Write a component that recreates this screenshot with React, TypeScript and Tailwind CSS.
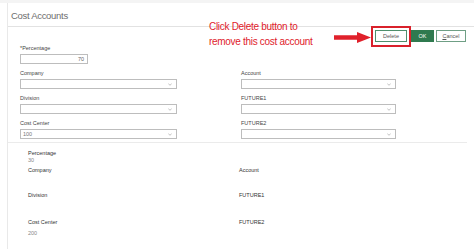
import React from "react";

function Chevron() {
  return (
    <svg width="4" height="3" viewBox="0 0 4 3" className="shrink-0">
      <path d="M0.3 0.5 L2 2.3 L3.7 0.5" fill="none" stroke="#9a9a9a" strokeWidth="0.6" />
    </svg>
  );
}

function SelectBox({ value, width }: { value?: string; width: string }) {
  return (
    <div className={`mt-[2px] flex h-[10px] items-center justify-between border border-[#bdbdbd] bg-white pl-[2px] pr-[4px] ${width}`}>
      <span className="text-[5.5px] leading-[7px] text-[#777]">{value}</span>
      <Chevron />
    </div>
  );
}

function FormField({ label, value, width }: { label: string; value?: string; width: string }) {
  return (
    <div>
      <div className="text-[5.5px] leading-[7px] text-[#454545]">{label}</div>
      <SelectBox value={value} width={width} />
    </div>
  );
}

function ReadLabel({ children }: { children: React.ReactNode }) {
  return <div className="text-[5.5px] leading-[7px] text-[#333]">{children}</div>;
}

export default function App() {
  return (
    <div className="relative h-[249px] w-[474px] overflow-hidden bg-white font-['Liberation_Sans',Arial,sans-serif]">
      <div className="h-[3px] bg-[#f4f4f4]" />
      <div className="ml-[7px] h-[246px] border-l border-[#e9e9e9]">
        <div className="border-b border-[#e2e2e2] pb-[4px] pl-[3px] pt-[7px] text-[9.5px] leading-[12px] tracking-[-0.3px] text-[#6e6e6e]">
          Cost Accounts
        </div>

        <div className="flex items-start justify-between">
          <div className="ml-[12px] mt-[18px]">
            <div className="text-[5.5px] leading-[7px] text-[#454545]">*Percentage</div>
            <div className="mt-[2px] flex h-[10px] w-[68px] items-center justify-end border border-[#bdbdbd] pr-[3px] text-[5.5px] leading-[7px] text-[#666]">
              70
            </div>
          </div>
          <div className="mr-[8px] mt-[3px] flex items-start">
            <div className="relative h-[12px] w-[32px]">
              <button className="flex h-[12px] w-[32px] items-center justify-center border border-[#4f8f6c] bg-white text-[5.5px] leading-[7px] text-[#555]">
                Delete
              </button>
              <div className="absolute -left-[4px] -top-[4px] h-[21px] w-[40px] border-2 border-[#d9212b]" />
            </div>
            <button className="ml-[4px] flex h-[12px] w-[23px] items-center justify-center bg-[#2f7a4f] text-[5.5px] leading-[7px] text-white">
              OK
            </button>
            <button className="ml-[2px] flex h-[12px] w-[30px] items-center justify-center border border-[#6f9f85] bg-white text-[5.5px] leading-[7px] text-[#555]">
              <span className="underline">C</span>ancel
            </button>
          </div>
        </div>

        <div className="ml-[12px] mt-[6px] grid grid-cols-[157px_155px] gap-x-[64px] gap-y-[6px]">
          <FormField label="Company" width="w-[157px]" />
          <FormField label="Account" width="w-[155px]" />
          <FormField label="Division" width="w-[157px]" />
          <FormField label="FUTURE1" width="w-[155px]" />
          <FormField label="Cost Center" value="100" width="w-[157px]" />
          <FormField label="FUTURE2" width="w-[155px]" />
        </div>

        <div className="mr-[7px] mt-[3px] border-b border-[#ebebeb]" />

        <div className="pl-[20px] pt-[7px]">
          <ReadLabel>Percentage</ReadLabel>
          <div className="text-[5.5px] leading-[7px] text-[#888]">30</div>
          <div className="mt-[3px] grid grid-cols-[211px_auto]">
            <div className="h-[25px]"><ReadLabel>Company</ReadLabel></div>
            <div className="h-[25px]"><ReadLabel>Account</ReadLabel></div>
            <div className="h-[27px]"><ReadLabel>Division</ReadLabel></div>
            <div className="h-[27px]"><ReadLabel>FUTURE1</ReadLabel></div>
            <div>
              <ReadLabel>Cost Center</ReadLabel>
              <div className="mt-[4px] text-[5.5px] leading-[7px] text-[#888]">200</div>
            </div>
            <div><ReadLabel>FUTURE2</ReadLabel></div>
          </div>
        </div>
      </div>

      {/* annotation callout */}
      <div className="absolute left-[209px] top-[19px] text-[10px] leading-[15px] tracking-[-0.3px] text-[#e0212b]">
        <div>Click Delete button to</div>
        <div>remove this cost account</div>
      </div>
      <svg className="absolute left-[334px] top-[32px]" width="37" height="11" viewBox="0 0 37 11">
        <polygon points="0,3.2 23,3.2 23,0 37,5.5 23,11 23,7.8 0,7.8" fill="#e0212b" />
      </svg>
    </div>
  );
}
